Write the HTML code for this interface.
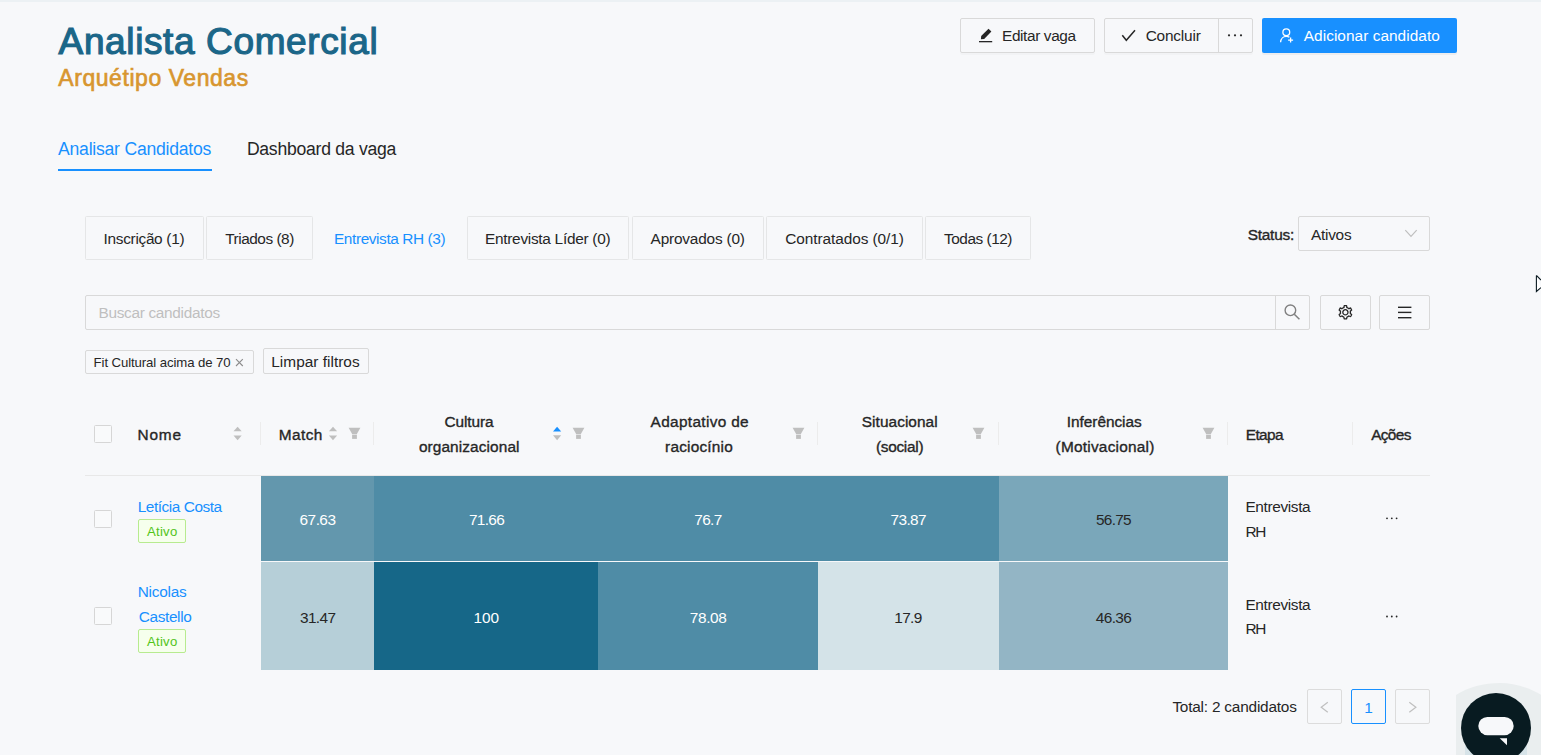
<!DOCTYPE html>
<html><head><meta charset="utf-8">
<style>
*{box-sizing:border-box;margin:0;padding:0}
html,body{width:1541px;height:755px;overflow:hidden;background:#f7f8fa;font-family:"Liberation Sans",sans-serif;color:#262626;position:relative}
.t{position:absolute;white-space:nowrap;line-height:normal}
.bm{display:inline-block;width:0;height:0}
.r{position:absolute}
.bx{position:absolute;border:1px solid #d9d9d9;border-radius:2px}
.st{position:absolute;top:216px;height:44px;border:1px solid #e5e6e7;border-radius:1.5px}
.cb{position:absolute;width:18px;height:18px;border:1px solid #d6d6d6;border-radius:1.5px;background:#f9fafb}
.sep{position:absolute;width:1px;top:422px;height:23px;background:#ececec}
svg{position:absolute;overflow:visible}
</style></head><body>
<div class="r" style="left:0;top:0;width:1541px;height:2px;background:#ecf1f4"></div>

<!-- header buttons -->
<div class="bx" style="left:960px;top:18px;width:135px;height:35px;box-shadow:0 2px 0 rgba(0,0,0,0.02)"></div>
<svg style="left:0;top:0" width="1" height="1">
  <path d="M980.9 39.3 L981.2 36 L988.5 28.8 L991.4 31.6 L984.2 38.9 Z" fill="#262626"/>
  <rect x="979" y="41" width="13.2" height="1.3" fill="#262626"/>
</svg>
<div class="bx" style="left:1104px;top:18px;width:149px;height:35px;box-shadow:0 2px 0 rgba(0,0,0,0.02)"></div>
<div class="r" style="left:1218px;top:18px;width:1px;height:35px;background:#d9d9d9"></div>
<svg style="left:0;top:0" width="1" height="1">
  <polyline points="1122.3,35.2 1126.3,40.3 1135,30.3" fill="none" stroke="#262626" stroke-width="1.5"/>
  <circle cx="1229" cy="35.3" r="1.1" fill="#262626"/>
  <circle cx="1235" cy="35.3" r="1.1" fill="#262626"/>
  <circle cx="1241" cy="35.3" r="1.1" fill="#262626"/>
</svg>
<div class="r" style="left:1262px;top:18px;width:195px;height:35px;background:#1890ff;border-radius:2px;box-shadow:0 2px 0 rgba(0,0,0,0.045)"></div>
<svg style="left:0;top:0" width="1" height="1">
  <circle cx="1286.3" cy="32.3" r="3.4" fill="none" stroke="#fff" stroke-width="1.3"/>
  <path d="M1280.6 42.2 C1280.8 38.6 1283.4 36.4 1286.3 36.4 C1287.5 36.4 1288.6 36.7 1289.4 37.3" fill="none" stroke="#fff" stroke-width="1.3"/>
  <path d="M1290.6 37.6 V42.6 M1288.1 40.1 H1293.1" stroke="#fff" stroke-width="1.3"/>
</svg>

<!-- tabs -->
<div class="r" style="left:58px;top:169px;width:154px;height:2px;background:#1890ff"></div>

<!-- stage tabs -->
<div class="st" style="left:85px;width:119px"></div>
<div class="st" style="left:206px;width:107px"></div>
<div class="st" style="left:467px;width:162px"></div>
<div class="st" style="left:632px;width:132px"></div>
<div class="st" style="left:766px;width:157px"></div>
<div class="st" style="left:925px;width:106px"></div>

<div class="bx" style="left:1298px;top:216px;width:132px;height:35px"></div>
<svg style="left:0;top:0" width="1" height="1">
  <polyline points="1405.3,230.2 1411,236.4 1416.7,230.2" fill="none" stroke="#bfbfbf" stroke-width="1.2"/>
</svg>

<!-- search -->
<div class="bx" style="left:85px;top:295px;width:1225px;height:35px"></div>
<div class="r" style="left:1275px;top:295px;width:1px;height:35px;background:#d9d9d9"></div>
<svg style="left:0;top:0" width="1" height="1">
  <circle cx="1290.4" cy="310.3" r="5.3" fill="none" stroke="#808080" stroke-width="1.4"/>
  <line x1="1294.3" y1="314.2" x2="1299.4" y2="319.3" stroke="#808080" stroke-width="1.5"/>
</svg>
<div class="bx" style="left:1320px;top:295px;width:51px;height:35px"></div>
<svg style="left:0;top:0" width="1" height="1">
  <g transform="translate(1345.4,312.3)">
    <path d="M5.00 0.00 L5.00 0.13 L4.99 0.26 L4.98 0.39 L4.97 0.52 L4.96 0.65 L4.94 0.78 L4.92 0.91 L4.89 1.04 L4.88 1.17 L5.11 1.37 L5.53 1.64 L5.94 1.93 L6.20 2.20 L6.21 2.38 L6.14 2.54 L6.08 2.70 L6.00 2.86 L5.93 3.02 L5.84 3.17 L5.76 3.32 L5.67 3.47 L5.58 3.62 L5.48 3.77 L5.38 3.91 L5.28 4.05 L5.17 4.18 L5.00 4.27 L4.64 4.18 L4.18 3.97 L3.74 3.74 L3.45 3.64 L3.35 3.72 L3.25 3.80 L3.15 3.89 L3.04 3.97 L2.94 4.05 L2.83 4.12 L2.72 4.19 L2.61 4.26 L2.50 4.33 L2.39 4.39 L2.27 4.46 L2.15 4.51 L2.03 4.57 L1.91 4.62 L1.79 4.67 L1.67 4.71 L1.55 4.76 L1.42 4.81 L1.37 5.11 L1.35 5.60 L1.30 6.11 L1.20 6.47 L1.04 6.57 L0.87 6.59 L0.70 6.61 L0.52 6.63 L0.35 6.64 L0.17 6.65 L0.00 6.65 L-0.17 6.65 L-0.35 6.64 L-0.52 6.63 L-0.70 6.61 L-0.87 6.59 L-1.04 6.57 L-1.20 6.47 L-1.30 6.11 L-1.35 5.60 L-1.37 5.11 L-1.42 4.81 L-1.55 4.76 L-1.67 4.71 L-1.79 4.67 L-1.91 4.62 L-2.03 4.57 L-2.15 4.51 L-2.27 4.46 L-2.39 4.39 L-2.50 4.33 L-2.61 4.26 L-2.72 4.19 L-2.83 4.12 L-2.94 4.05 L-3.04 3.97 L-3.15 3.89 L-3.25 3.80 L-3.35 3.72 L-3.45 3.64 L-3.74 3.74 L-4.18 3.97 L-4.64 4.18 L-5.00 4.27 L-5.17 4.18 L-5.28 4.05 L-5.38 3.91 L-5.48 3.77 L-5.58 3.62 L-5.67 3.47 L-5.76 3.32 L-5.84 3.17 L-5.93 3.02 L-6.00 2.86 L-6.08 2.70 L-6.14 2.54 L-6.21 2.38 L-6.20 2.20 L-5.94 1.93 L-5.53 1.64 L-5.11 1.37 L-4.88 1.17 L-4.89 1.04 L-4.92 0.91 L-4.94 0.78 L-4.96 0.65 L-4.97 0.52 L-4.98 0.39 L-4.99 0.26 L-5.00 0.13 L-5.00 0.00 L-5.00 -0.13 L-4.99 -0.26 L-4.98 -0.39 L-4.97 -0.52 L-4.96 -0.65 L-4.94 -0.78 L-4.92 -0.91 L-4.89 -1.04 L-4.88 -1.17 L-5.11 -1.37 L-5.53 -1.64 L-5.94 -1.93 L-6.20 -2.20 L-6.21 -2.38 L-6.14 -2.54 L-6.08 -2.70 L-6.00 -2.86 L-5.93 -3.02 L-5.84 -3.17 L-5.76 -3.32 L-5.67 -3.47 L-5.58 -3.62 L-5.48 -3.77 L-5.38 -3.91 L-5.28 -4.05 L-5.17 -4.18 L-5.00 -4.27 L-4.64 -4.18 L-4.18 -3.97 L-3.74 -3.74 L-3.45 -3.64 L-3.35 -3.72 L-3.25 -3.80 L-3.15 -3.89 L-3.04 -3.97 L-2.94 -4.05 L-2.83 -4.12 L-2.72 -4.19 L-2.61 -4.26 L-2.50 -4.33 L-2.39 -4.39 L-2.27 -4.46 L-2.15 -4.51 L-2.03 -4.57 L-1.91 -4.62 L-1.79 -4.67 L-1.67 -4.71 L-1.55 -4.76 L-1.42 -4.81 L-1.37 -5.11 L-1.35 -5.60 L-1.30 -6.11 L-1.20 -6.47 L-1.04 -6.57 L-0.87 -6.59 L-0.70 -6.61 L-0.52 -6.63 L-0.35 -6.64 L-0.17 -6.65 L-0.00 -6.65 L0.17 -6.65 L0.35 -6.64 L0.52 -6.63 L0.70 -6.61 L0.87 -6.59 L1.04 -6.57 L1.20 -6.47 L1.30 -6.11 L1.35 -5.60 L1.37 -5.11 L1.42 -4.81 L1.55 -4.76 L1.67 -4.71 L1.79 -4.67 L1.91 -4.62 L2.03 -4.57 L2.15 -4.51 L2.27 -4.46 L2.39 -4.39 L2.50 -4.33 L2.61 -4.26 L2.72 -4.19 L2.83 -4.12 L2.94 -4.05 L3.04 -3.97 L3.15 -3.89 L3.25 -3.80 L3.35 -3.72 L3.45 -3.64 L3.74 -3.74 L4.18 -3.97 L4.64 -4.18 L5.00 -4.27 L5.17 -4.18 L5.28 -4.05 L5.38 -3.91 L5.48 -3.77 L5.58 -3.62 L5.67 -3.47 L5.76 -3.32 L5.84 -3.17 L5.93 -3.02 L6.00 -2.86 L6.08 -2.70 L6.14 -2.54 L6.21 -2.38 L6.20 -2.20 L5.94 -1.93 L5.53 -1.64 L5.11 -1.37 L4.88 -1.17 L4.89 -1.04 L4.92 -0.91 L4.94 -0.78 L4.96 -0.65 L4.97 -0.52 L4.98 -0.39 L4.99 -0.26 L5.00 -0.13 Z" fill="none" stroke="#262626" stroke-width="1.3"/>
    <circle cx="0" cy="0" r="2.6" fill="none" stroke="#262626" stroke-width="1.3"/>
  </g>
</svg>
<div class="bx" style="left:1379px;top:295px;width:51px;height:35px"></div>
<svg style="left:0;top:0" width="1" height="1">
  <rect x="1398" y="306.6" width="13.4" height="1.4" fill="#262626"/>
  <rect x="1398" y="311.7" width="13.4" height="1.4" fill="#262626"/>
  <rect x="1398" y="317" width="13.4" height="1.4" fill="#262626"/>
</svg>

<!-- filters -->
<div class="bx" style="left:85px;top:350px;width:169px;height:24px"></div>
<svg style="left:0;top:0" width="1" height="1">
  <path d="M236 359.2 L242.8 366 M242.8 359.2 L236 366" stroke="#8c8c8c" stroke-width="1.1"/>
</svg>
<div class="bx" style="left:263px;top:348px;width:106px;height:26px"></div>

<!-- table header -->
<div class="cb" style="left:94px;top:425px"></div>
<svg style="left:0;top:0" width="1" height="1" fill="#bfbfbf">
  <!-- Nome sort -->
  <path d="M233.5 431.3 L237.6 426.7 L241.7 431.3 Z"/>
  <path d="M233.5 435.4 L237.6 440.2 L241.7 435.4 Z"/>
  <!-- Match sort -->
  <path d="M328.9 431.3 L333 426.7 L337.1 431.3 Z"/>
  <path d="M328.9 435.4 L333 440.2 L337.1 435.4 Z"/>
  <!-- Match filter -->
  <path d="M348.6 427.8 H360.4 L356.9 433.9 H352.1 Z"/>
  <rect x="352.1" y="434.6" width="4.8" height="4.3"/>
  <!-- Cultura sort -->
  <path d="M553 431.6 L557.1 426.8 L561.2 431.6 Z" fill="#1890ff"/>
  <path d="M553 435.2 L557.1 440.2 L561.2 435.2 Z"/>
  <path d="M572.6 427.8 H584.4 L580.9 433.9 H576.1 Z"/>
  <rect x="576.1" y="434.6" width="4.8" height="4.3"/>
  <!-- Adaptativo filter -->
  <path d="M792.6 427.8 H804.4 L800.9 433.9 H796.1 Z"/>
  <rect x="796.1" y="434.6" width="4.8" height="4.3"/>
  <!-- Situacional filter -->
  <path d="M972.6 427.8 H984.4 L980.9 433.9 H976.1 Z"/>
  <rect x="976.1" y="434.6" width="4.8" height="4.3"/>
  <!-- Inferencias filter -->
  <path d="M1202.6 427.8 H1214.4 L1210.9 433.9 H1206.1 Z"/>
  <rect x="1206.1" y="434.6" width="4.8" height="4.3"/>
</svg>
<div class="sep" style="left:260px"></div>
<div class="sep" style="left:373px"></div>
<div class="sep" style="left:817px"></div>
<div class="sep" style="left:998px"></div>
<div class="sep" style="left:1227px"></div>
<div class="sep" style="left:1352px"></div>
<div class="r" style="left:85px;top:475px;width:1345px;height:1px;background:#e8e8e8"></div>

<!-- heatmap -->
<div class="r" style="left:261px;top:476px;width:113px;height:85px;background:#6397ad"></div>
<div class="r" style="left:374px;top:476px;width:625px;height:85px;background:#4f8ca6"></div>
<div class="r" style="left:999px;top:476px;width:229px;height:85px;background:#7aa7ba"></div>
<div class="r" style="left:261px;top:562px;width:113px;height:108px;background:#b6cfd8"></div>
<div class="r" style="left:374px;top:562px;width:224px;height:108px;background:#166788"></div>
<div class="r" style="left:598px;top:562px;width:220px;height:108px;background:#4f8ca6"></div>
<div class="r" style="left:818px;top:562px;width:181px;height:108px;background:#d4e3e8"></div>
<div class="r" style="left:999px;top:562px;width:229px;height:108px;background:#93b5c5"></div>

<!-- rows -->
<div class="cb" style="left:94px;top:510px"></div>
<div class="r" style="left:138px;top:519px;width:48px;height:24px;border:1px solid #b7eb8f;background:#f6ffed;border-radius:2px"></div>
<div class="cb" style="left:94px;top:607px"></div>
<div class="r" style="left:138px;top:629px;width:48px;height:24px;border:1px solid #b7eb8f;background:#f6ffed;border-radius:2px"></div>
<svg style="left:0;top:0" width="1" height="1" fill="#262626">
  <circle cx="1387" cy="518.3" r="0.9"/><circle cx="1391.8" cy="518.3" r="0.9"/><circle cx="1396.6" cy="518.3" r="0.9"/>
  <circle cx="1387" cy="616.5" r="0.9"/><circle cx="1391.8" cy="616.5" r="0.9"/><circle cx="1396.6" cy="616.5" r="0.9"/>
</svg>

<!-- pagination -->
<div class="bx" style="left:1307px;top:689px;width:35px;height:35px;border-color:#dcdcdc"></div>
<div class="bx" style="left:1351px;top:689px;width:35px;height:35px;border-color:#1890ff"></div>
<div class="bx" style="left:1395px;top:689px;width:35px;height:35px;border-color:#dcdcdc"></div>
<svg style="left:0;top:0" width="1" height="1">
  <polyline points="1327.8,702.3 1321.2,707.3 1327.8,712.3" fill="none" stroke="#bfbfbf" stroke-width="1.2"/>
  <polyline points="1409.3,702.3 1415.9,707.3 1409.3,712.3" fill="none" stroke="#bfbfbf" stroke-width="1.2"/>
</svg>

<!-- chat widget -->
<svg style="left:0;top:0" width="1" height="1"><path d="M1456 760 V695 C1468 687 1484 683 1500 683 C1516 683 1532 689 1545 697 V760 Z" fill="#eaeeef"/><rect x="1465" y="745.5" width="62" height="15" fill="#d6e3e8"/></svg>
<div class="r" style="left:1461px;top:693px;width:70px;height:70px;border-radius:50%;background:#081b21"></div>
<svg style="left:0;top:0" width="1" height="1">
  <rect x="1478.3" y="716.9" width="35.4" height="18.3" rx="9.1" fill="#f7f8fa"/>
  <path d="M1499.7 738.2 H1507 V745.3 Z" fill="#f7f8fa"/>
</svg>

<!-- cursor -->
<svg style="left:0;top:0" width="1" height="1">
  <path d="M1536.4 275.4 V291.5 L1541 287.6 M1536.4 275.4 L1541 280" fill="#fff" stroke="#0b1a21" stroke-width="1.1"/>
</svg>

<div class="t" id="t0" style="left:58.60px;top:21px;font-size:37px;font-weight:normal;color:#1b6688;letter-spacing:0.622px;-webkit-text-stroke:1.2px #1b6688;">Analista Comercial<span class="bm"></span></div>
<div class="t" id="t1" style="left:58.33px;top:65px;font-size:23px;font-weight:normal;color:#d8962f;letter-spacing:0.551px;-webkit-text-stroke:0.65px #d8962f;">Arquétipo Vendas<span class="bm"></span></div>
<div class="t" id="t2" style="left:1002.00px;top:27px;font-size:15.4px;font-weight:normal;color:#262626;letter-spacing:-0.380px;">Editar vaga<span class="bm"></span></div>
<div class="t" id="t3" style="left:1145.70px;top:27px;font-size:15.4px;font-weight:normal;color:#262626;letter-spacing:-0.190px;">Concluir<span class="bm"></span></div>
<div class="t" id="t4" style="left:1303.80px;top:27px;font-size:15.4px;font-weight:normal;color:#ffffff;letter-spacing:0.043px;">Adicionar candidato<span class="bm"></span></div>
<div class="t" id="t5" style="left:58.00px;top:139px;font-size:17.6px;font-weight:normal;color:#1890ff;letter-spacing:-0.226px;">Analisar Candidatos<span class="bm"></span></div>
<div class="t" id="t6" style="left:246.90px;top:139px;font-size:17.6px;font-weight:normal;color:#262626;letter-spacing:-0.255px;">Dashboard da vaga<span class="bm"></span></div>
<div class="t" id="t7" style="left:103.60px;top:230px;font-size:15.4px;font-weight:normal;color:#262626;letter-spacing:-0.312px;">Inscrição (1)<span class="bm"></span></div>
<div class="t" id="t8" style="left:225.20px;top:230px;font-size:15.4px;font-weight:normal;color:#262626;letter-spacing:-0.471px;">Triados (8)<span class="bm"></span></div>
<div class="t" id="t9" style="left:334.00px;top:230px;font-size:15.4px;font-weight:normal;color:#1890ff;letter-spacing:-0.400px;">Entrevista RH (3)<span class="bm"></span></div>
<div class="t" id="t10" style="left:485.00px;top:230px;font-size:15.4px;font-weight:normal;color:#262626;letter-spacing:-0.281px;">Entrevista Líder (0)<span class="bm"></span></div>
<div class="t" id="t11" style="left:650.60px;top:230px;font-size:15.4px;font-weight:normal;color:#262626;letter-spacing:-0.195px;">Aprovados (0)<span class="bm"></span></div>
<div class="t" id="t12" style="left:785.20px;top:230px;font-size:15.4px;font-weight:normal;color:#262626;letter-spacing:-0.071px;">Contratados (0/1)<span class="bm"></span></div>
<div class="t" id="t13" style="left:944.10px;top:230px;font-size:15.4px;font-weight:normal;color:#262626;letter-spacing:-0.488px;">Todas (12)<span class="bm"></span></div>
<div class="t" id="t14" style="left:1247.67px;top:226px;font-size:15.4px;font-weight:normal;color:#262626;letter-spacing:-0.214px;-webkit-text-stroke:0.35px #262626;">Status:<span class="bm"></span></div>
<div class="t" id="t15" style="left:1311.10px;top:226px;font-size:15.4px;font-weight:normal;color:#262626;letter-spacing:-0.283px;">Ativos<span class="bm"></span></div>
<div class="t" id="t16" style="left:98.50px;top:304px;font-size:15.4px;font-weight:normal;color:#bfbfbf;letter-spacing:-0.314px;">Buscar candidatos<span class="bm"></span></div>
<div class="t" id="t17" style="left:93.60px;top:355px;font-size:13.2px;font-weight:normal;color:#262626;letter-spacing:-0.097px;">Fit Cultural acima de 70<span class="bm"></span></div>
<div class="t" id="t18" style="left:271.30px;top:353px;font-size:15.4px;font-weight:normal;color:#262626;letter-spacing:0.016px;">Limpar filtros<span class="bm"></span></div>
<div class="t" id="t19" style="left:137.58px;top:426px;font-size:15.4px;font-weight:normal;color:#262626;letter-spacing:0.785px;-webkit-text-stroke:0.35px #262626;">Nome<span class="bm"></span></div>
<div class="t" id="t20" style="left:278.68px;top:426px;font-size:15.4px;font-weight:normal;color:#262626;letter-spacing:0.450px;-webkit-text-stroke:0.35px #262626;">Match<span class="bm"></span></div>
<div class="t" id="t21" style="left:444.48px;top:413px;font-size:15.4px;font-weight:normal;color:#262626;letter-spacing:-0.101px;-webkit-text-stroke:0.35px #262626;">Cultura<span class="bm"></span></div>
<div class="t" id="t22" style="left:418.88px;top:438px;font-size:15.4px;font-weight:normal;color:#262626;letter-spacing:0.109px;-webkit-text-stroke:0.35px #262626;">organizacional<span class="bm"></span></div>
<div class="t" id="t23" style="left:650.57px;top:413px;font-size:15.4px;font-weight:normal;color:#262626;letter-spacing:0.324px;-webkit-text-stroke:0.35px #262626;">Adaptativo de<span class="bm"></span></div>
<div class="t" id="t24" style="left:665.07px;top:438px;font-size:15.4px;font-weight:normal;color:#262626;letter-spacing:0.205px;-webkit-text-stroke:0.35px #262626;">raciocínio<span class="bm"></span></div>
<div class="t" id="t25" style="left:861.77px;top:413px;font-size:15.4px;font-weight:normal;color:#262626;letter-spacing:0.058px;-webkit-text-stroke:0.35px #262626;">Situacional<span class="bm"></span></div>
<div class="t" id="t26" style="left:875.88px;top:438px;font-size:15.4px;font-weight:normal;color:#262626;letter-spacing:-0.275px;-webkit-text-stroke:0.35px #262626;">(social)<span class="bm"></span></div>
<div class="t" id="t27" style="left:1066.77px;top:413px;font-size:15.4px;font-weight:normal;color:#262626;letter-spacing:-0.034px;-webkit-text-stroke:0.35px #262626;">Inferências<span class="bm"></span></div>
<div class="t" id="t28" style="left:1055.58px;top:438px;font-size:15.4px;font-weight:normal;color:#262626;letter-spacing:0.229px;-webkit-text-stroke:0.35px #262626;">(Motivacional)<span class="bm"></span></div>
<div class="t" id="t29" style="left:1245.77px;top:426px;font-size:15.4px;font-weight:normal;color:#262626;letter-spacing:-0.603px;-webkit-text-stroke:0.35px #262626;">Etapa<span class="bm"></span></div>
<div class="t" id="t30" style="left:1371.17px;top:426px;font-size:15.4px;font-weight:normal;color:#262626;letter-spacing:-0.632px;-webkit-text-stroke:0.35px #262626;">Ações<span class="bm"></span></div>
<div class="t" id="t31" style="left:137.70px;top:498px;font-size:15.4px;font-weight:normal;color:#1890ff;letter-spacing:-0.447px;">Letícia Costa<span class="bm"></span></div>
<div class="t" id="t32" style="left:146.90px;top:524px;font-size:13.2px;font-weight:normal;color:#52c41a;letter-spacing:0.279px;">Ativo<span class="bm"></span></div>
<div class="t" id="t33" style="left:137.70px;top:583px;font-size:15.4px;font-weight:normal;color:#1890ff;letter-spacing:-0.228px;">Nicolas<span class="bm"></span></div>
<div class="t" id="t34" style="left:138.70px;top:608px;font-size:15.4px;font-weight:normal;color:#1890ff;letter-spacing:-0.363px;">Castello<span class="bm"></span></div>
<div class="t" id="t35" style="left:146.90px;top:634px;font-size:13.2px;font-weight:normal;color:#52c41a;letter-spacing:0.279px;">Ativo<span class="bm"></span></div>
<div class="t" id="t36" style="left:1245.40px;top:498px;font-size:15.4px;font-weight:normal;color:#262626;letter-spacing:-0.352px;">Entrevista<span class="bm"></span></div>
<div class="t" id="t37" style="left:1245.40px;top:523px;font-size:15.4px;font-weight:normal;color:#262626;letter-spacing:-1.215px;">RH<span class="bm"></span></div>
<div class="t" id="t38" style="left:1245.40px;top:596px;font-size:15.4px;font-weight:normal;color:#262626;letter-spacing:-0.352px;">Entrevista<span class="bm"></span></div>
<div class="t" id="t39" style="left:1245.40px;top:620px;font-size:15.4px;font-weight:normal;color:#262626;letter-spacing:-1.215px;">RH<span class="bm"></span></div>
<div class="t" id="t40" style="left:1172.40px;top:698px;font-size:15.4px;font-weight:normal;color:#262626;letter-spacing:-0.214px;">Total: 2 candidatos<span class="bm"></span></div>
<div class="t" id="t41" style="left:1364.30px;top:699px;font-size:15.4px;font-weight:normal;color:#1890ff;letter-spacing:0.000px;">1<span class="bm"></span></div>
<div class="t" id="t42" style="left:299.60px;top:511px;font-size:15.4px;font-weight:normal;color:#ffffff;letter-spacing:-0.539px;">67.63<span class="bm"></span></div>
<div class="t" id="t43" style="left:468.90px;top:511px;font-size:15.4px;font-weight:normal;color:#ffffff;letter-spacing:-0.639px;">71.66<span class="bm"></span></div>
<div class="t" id="t44" style="left:694.25px;top:511px;font-size:15.4px;font-weight:normal;color:#ffffff;letter-spacing:-0.632px;">76.7<span class="bm"></span></div>
<div class="t" id="t45" style="left:890.60px;top:511px;font-size:15.4px;font-weight:normal;color:#ffffff;letter-spacing:-0.639px;">73.87<span class="bm"></span></div>
<div class="t" id="t46" style="left:1095.90px;top:511px;font-size:15.4px;font-weight:normal;color:#262626;letter-spacing:-0.689px;">56.75<span class="bm"></span></div>
<div class="t" id="t47" style="left:300.00px;top:609px;font-size:15.4px;font-weight:normal;color:#262626;letter-spacing:-0.639px;">31.47<span class="bm"></span></div>
<div class="t" id="t48" style="left:473.60px;top:609px;font-size:15.4px;font-weight:normal;color:#ffffff;letter-spacing:-0.060px;">100<span class="bm"></span></div>
<div class="t" id="t49" style="left:689.75px;top:609px;font-size:15.4px;font-weight:normal;color:#ffffff;letter-spacing:-0.364px;">78.08<span class="bm"></span></div>
<div class="t" id="t50" style="left:894.25px;top:609px;font-size:15.4px;font-weight:normal;color:#262626;letter-spacing:-0.632px;">17.9<span class="bm"></span></div>
<div class="t" id="t51" style="left:1095.75px;top:609px;font-size:15.4px;font-weight:normal;color:#262626;letter-spacing:-0.614px;">46.36<span class="bm"></span></div>
</body></html>
